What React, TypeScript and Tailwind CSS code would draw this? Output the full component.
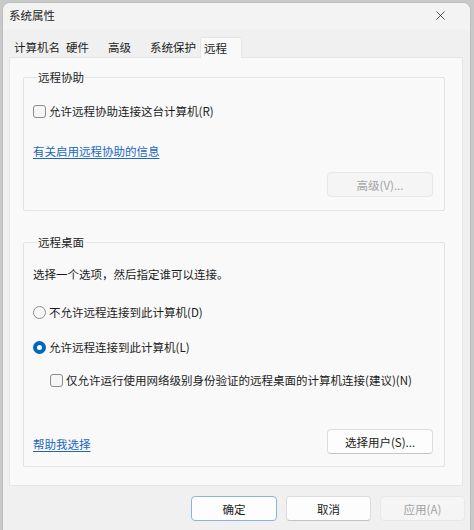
import { X } from 'lucide-react';

const font = { fontFamily: '"Noto Sans CJK SC", "Noto Sans", sans-serif' };

function CheckBox({ label }: { label: string }) {
  return (
    <div className="flex items-center h-4">
      <span className="w-[13px] h-[13px] rounded-[3px] border border-[#8c8c8c] bg-[#f6f6f6] shrink-0" />
      <span className="ml-[3px] text-[11.5px] leading-4 text-[#1b1b1b]">{label}</span>
    </div>
  );
}

function Radio({ label, checked }: { label: string; checked?: boolean }) {
  return (
    <div className="flex items-center h-4">
      {checked ? (
        <span className="w-[13px] h-[13px] rounded-full bg-[#0067c0] flex items-center justify-center shrink-0">
          <span className="w-[5px] h-[5px] rounded-full bg-white" />
        </span>
      ) : (
        <span className="w-[13px] h-[13px] rounded-full border border-[#8c8c8c] bg-[#f6f6f6] shrink-0" />
      )}
      <span className="ml-[3px] text-[11.5px] leading-4 text-[#1b1b1b]">{label}</span>
    </div>
  );
}

function Button({
  label,
  disabled,
  primary,
  className = '',
}: {
  label: string;
  disabled?: boolean;
  primary?: boolean;
  className?: string;
}) {
  const look = disabled
    ? 'bg-[#f5f5f5] border-[#e8e8e8] text-[#a3a3a3]'
    : primary
      ? 'bg-[#fdfdfd] border-[#8ab4de] text-[#1b1b1b]'
      : 'bg-[#fdfdfd] border-[#dcdcdc] border-b-[#c4c4c4] text-[#1b1b1b]';
  return (
    <button
      className={`h-[25px] rounded-[4px] border text-[11.5px] leading-4 flex items-center justify-center ${look} ${className}`}
    >
      {label}
    </button>
  );
}

const tabs = [
  { name: '计算机名', cls: 'w-[54px] pl-[5px]' },
  { name: '硬件', cls: 'w-[42px] pl-[3px]' },
  { name: '高级', cls: 'w-[42px] pl-[3px]' },
  { name: '系统保护', cls: 'w-[53px] pl-[3px]' },
];

export default function App() {
  return (
    <div className="w-[474px] h-[530px] bg-[#c9c9c9] overflow-hidden pt-[2px] pl-[2px]" style={font}>
      <div className="w-[469px] h-[530px] rounded-t-[8px] border border-[#bdbdbd] bg-[#f0f0f0] flex flex-col overflow-hidden">
        {/* ── Title bar ───────────────────────────── */}
        <div className="h-[27px] shrink-0 bg-[#f3f3f3] flex items-center justify-between pl-[6px] pr-[22px] pb-[3px]">
          <span className="text-[11.5px] leading-4 text-[#1b1b1b]">系统属性</span>
          <X size={15} strokeWidth={1.2} className="text-[#1b1b1b]" />
        </div>

        <div className="pl-[6px] pr-[7px]">
          {/* ── Tabs ─────────────────────────────── */}
          <div className="flex items-end h-[20px] mt-[7px] relative z-10">
            {tabs.map((t) => (
              <div key={t.name} className={`h-[20px] flex items-center text-[11.5px] leading-4 text-[#1b1b1b] ${t.cls}`}>
                {t.name}
              </div>
            ))}
            <div className="w-[42px] h-[21px] -mb-px pl-[3px] flex items-center text-[11.5px] leading-4 text-[#1b1b1b] bg-[#f9f9f9] border border-b-0 border-[#e6e6e6] rounded-t-[2px]">
              远程
            </div>
          </div>

          {/* ── Panel ────────────────────────────── */}
          <div className="w-[454px] h-[429px] bg-[#f9f9f9] border border-[#e6e6e6] pt-[11px] pl-[13px]">
            <fieldset className="w-[422px] border border-[#e3e3e3] rounded-[2px] pl-[9px] pr-[11px] pb-[13px] flex flex-col">
              <legend className="ml-[4px] px-px text-[11.5px] leading-4 text-[#1b1b1b]">远程协助</legend>
              <div className="pt-[18px]">
                <CheckBox label="允许远程协助连接这台计算机(R)" />
              </div>
              <a className="mt-[24px] h-4 text-[11.5px] leading-4 text-[#1a67c0] underline underline-offset-2 self-start cursor-pointer">
                有关启用远程协助的信息
              </a>
              <Button label="高级(V)..." disabled className="mt-[13px] w-[106px] self-end" />
            </fieldset>

            <fieldset className="mt-[23px] w-[422px] h-[233px] border border-[#e3e3e3] rounded-[2px] pl-[9px] pr-[11px] flex flex-col">
              <legend className="ml-[4px] px-px text-[11.5px] leading-4 text-[#1b1b1b]">远程桌面</legend>
              <p className="mt-[16px] h-4 text-[11.5px] leading-4 text-[#1b1b1b]">选择一个选项，然后指定谁可以连接。</p>
              <div className="mt-[22px]">
                <Radio label="不允许远程连接到此计算机(D)" />
              </div>
              <div className="mt-[19px]">
                <Radio label="允许远程连接到此计算机(L)" checked />
              </div>
              <div className="mt-[17px] pl-[17px]">
                <CheckBox label="仅允许运行使用网络级别身份验证的远程桌面的计算机连接(建议)(N)" />
              </div>
              <div className="mt-[41px] flex items-center justify-between">
                <a className="mt-[5px] text-[11.5px] leading-4 text-[#1a67c0] underline underline-offset-2 cursor-pointer">
                  帮助我选择
                </a>
                <Button label="选择用户(S)..." className="w-[106px]" />
              </div>
            </fieldset>
          </div>

          {/* ── Footer buttons ───────────────────── */}
          <div className="mt-[10px] flex justify-end gap-[9px] -mr-[2px]">
            <Button label="确定" primary className="w-[86px]" />
            <Button label="取消" className="w-[85px]" />
            <Button label="应用(A)" disabled className="w-[85px]" />
          </div>
        </div>
      </div>
    </div>
  );
}
